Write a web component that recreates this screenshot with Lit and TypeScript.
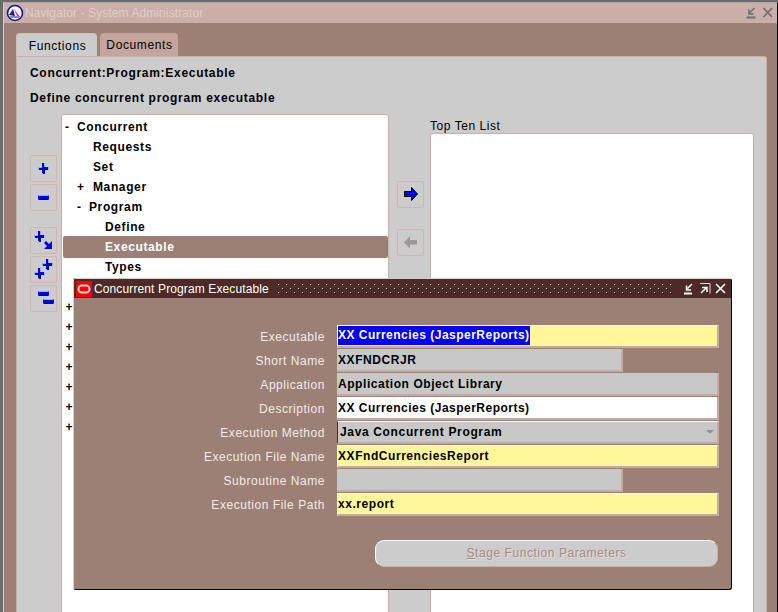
import { LitElement, html, css, svg } from "lit";
import { customElement } from "lit/decorators.js";

const plus = (x: number, y: number) => svg`<g transform="translate(${x} ${y})"><path d="M4 0h3v4h4v3H7v4H4V7H0V4h4z" fill="#0000e0"/><path d="M6 0h1v4H6zM4 10h1v1H4zM0 4h4v1H1v2H0zM10 4h1v3h-1z" fill="#8cb4f0"/><path d="M7 6h3v1H7v3H6V7z" fill="#000080"/></g>`;
const minus = (x: number, y: number) => svg`<g transform="translate(${x} ${y})"><rect x="0" y="0" width="11" height="5" rx="1.5" fill="#0000e0"/><rect x="1" y="0" width="9" height="1" fill="#8cb4f0"/><rect x="1" y="4" width="9" height="1" fill="#000080"/></g>`;

const TREE = [
  ["-", "Concurrent", 15, 3],
  ["", "Requests", 31, 0],
  ["", "Set", 31, 0],
  ["+", "Manager", 31, 15],
  ["-", "Program", 27, 15],
  ["", "Define", 43, 0],
  ["", "Executable", 42, 0, true],
  ["", "Types", 43, 0],
] as [string, string, number, number, boolean?][];

const FIELDS = [
  ["Executable", "XX Currencies (JasperReports)", "yellow full sel"],
  ["Short Name", "XXFNDCRJR", "grey short"],
  ["Application", "Application Object Library", "grey full"],
  ["Description", "XX Currencies (JasperReports)", "white full"],
  ["Execution Method", "Java Concurrent Program", "select full"],
  ["Execution File Name", "XXFndCurrenciesReport", "yellow full"],
  ["Subroutine Name", "", "grey short"],
  ["Execution File Path", "xx.report", "yellow full"],
];

@customElement("app-root")
export class AppRoot extends LitElement {
  static styles = css`
    :host { display: block; width: 778px; height: 612px; overflow: hidden; position: relative; background: #6b6b6b; font-family: "Liberation Sans", Arial, sans-serif; font-size: 12px; color: #000; }
    * { box-sizing: border-box; }
    .win { height: 612px; margin: 2px 0 0 3px; border-top: 1px solid #a8a8a8; border-left: 1px solid #cfcfcf; border-right: 1px solid #000; background: #9c7f75; display: flex; flex-direction: column; }
    .titlebar { height: 20px; flex: none; background: #ccaea8; display: flex; align-items: center; padding: 0 2px 0 2px; color: #dfcfca; letter-spacing: .09px; }
    .titlebar .t { margin-left: 1px; flex: 1; }
    .tabs { display: flex; gap: 3px; padding: 10px 0 0 12px; height: 33px; flex: none; }
    .tab { height: 23px; padding-top: 5px; text-align: center; letter-spacing: .62px; border-radius: 4px 4px 0 0; }
    .tab.on { width: 81px; background: #cccccc; border-top: 1px solid #d8bcb6; border-left: 1px solid #d8bcb6; padding-left: 1px; }
    .tab.off { width: 78px; background: #c4a59e; padding-left: 1px; }
    .panel { margin: 0 10px 0 12px; flex: 1; background: #cccccc; border-left: 1px solid #ccaea8; border-top: 1px solid #ccaea8; border-right: 1px solid #ccaea8; border-radius: 0 3px 0 0; padding: 9px 0 0 13px; }
    .crumb { font-weight: bold; letter-spacing: .7px; height: 25px; line-height: 15px; }
    .crumb + .crumb { height: 23px; }
    .main { display: flex; }
    .tools { width: 31px; flex: none; padding-top: 41px; display: flex; flex-direction: column; }
    .btn { width: 27px; height: 27px; border: 1px solid #d4b4ae; border-radius: 2px; display: block; background: #cccccc; flex: none; }
    .btn svg { display: block; }
    .g2 { margin-top: 2px; }
    .gap { margin-top: 16px; }
    .tree { width: 328px; height: 520px; background: #fff; border: 1px solid #ccaea8; border-radius: 3px 3px 0 0; padding-top: 2px; }
    .row { height: 20px; line-height: 20px; font-weight: bold; letter-spacing: .62px; position: relative; white-space: nowrap; }
    .row .sign { position: absolute; top: 0; }
    .row.sel { background: #9c7f75; color: #fff; margin: -1px 0 -1px 1px; height: 22px; line-height: 22px; border-radius: 2px; }
    .mid { width: 41px; flex: none; display: flex; flex-direction: column; align-items: center; padding-top: 67px; padding-left: 1px; }
    .mid .gap2 { margin-top: 21px; }
    .top { width: 324px; margin-top: 6px; flex: none; }
    .top .lbl { height: 13px; line-height: 13px; letter-spacing: .55px; }
    .list { height: 500px; background: #fff; border: 1px solid #ccaea8; border-radius: 3px 3px 0 0; }

    .dlg { position: absolute; left: 73px; top: 278px; width: 659px; height: 312px; background: #9c7f75; border-top: 1px solid #cfcfcf; border-left: 1px solid #cfcfcf; border-right: 1px solid #000; border-bottom: 1px solid #000; border-radius: 0 3px 3px 3px; display: flex; flex-direction: column; }
    .dtitle { height: 19px; flex: none; background: #4d2a26; color: #fff; display: flex; align-items: center; letter-spacing: .12px; padding-right: 2px; }
    .logo { width: 16px; height: 16px; background: #ff0000; margin: 0 2px; flex: none; display: block; }
    .dtitle .t { width: 184px; flex: none; white-space: nowrap; }
    .dots { width: 394px; height: 10px; flex: none; display: block; margin-top: 1px; }
    .ics { margin-left: auto; display: flex; }
    .form { padding: 27px 12px 0 0; display: grid; grid-template-columns: 251px 382px; column-gap: 12px; row-gap: 1px; align-items: start; }
    .lab { text-align: right; color: #f2ebe8; letter-spacing: .54px; height: 23px; line-height: 24px; white-space: nowrap; }
    .f { height: 23px; line-height: 22px; padding-left: 1px; font-weight: bold; letter-spacing: .56px; border-bottom: 2px solid #c8aaa4; border-right: 2px solid #c8aaa4; white-space: nowrap; background: #cccccc; }
    .short { width: 286px; }
    .yellow { background: #fff799; border-left: 1px solid #fffcd0; border-top: 1px solid #fffcd0; padding-left: 0; line-height: 21px; }
    .white { background: #fff; letter-spacing: .49px; }
    .grey { background: #c8c8c8; }
    .select { display: flex; align-items: center; justify-content: space-between; border-top: 1px solid #fff; border-left: 1px solid #4d2a26; padding: 0 3px 0 2px; background: #c8c8c8; letter-spacing: .65px; line-height: 20px; }
    .sel-text { background: #0000ff; color: #fff; letter-spacing: .49px; display: inline-block; line-height: 19px; vertical-align: top; }
    .arr { width: 0; height: 0; border-left: 4px solid transparent; border-right: 4px solid transparent; border-top: 4px solid #9c8f8a; }
    .action { margin: 24px 0 0 301px; width: 343px; height: 27px; border-radius: 9px; background: #cccccc; border: 1px solid #ccaea8; border-top-color: #fff; border-left-color: #fff; text-align: center; line-height: 24px; color: #a98a82; text-shadow: 1px 1px 0 #e6dcda; letter-spacing: .56px; }
    .extra { position: absolute; left: 63px; width: 12px; font-weight: bold; text-align: center; line-height: 20px; height: 20px; }
  `;

  render() {
    return html`
      <div class="win">
        <div class="titlebar">
          <svg width="18" height="18" viewBox="0 0 18 18">
            <circle cx="9" cy="9" r="7.500" fill="#f2f2f8" stroke="#15158c" stroke-width="1.600"/>
            <path d="M3 11l4-6 2 7z" fill="#20208c"/>
            <path d="M8 5l6 8-2 1z" fill="#c82a7a"/>
            <path d="M3 12h11l-2 2H5z" fill="#8888c8"/>
          </svg>
          <span class="t">Navigator - System Administrator</span>
          <svg width="30" height="14" viewBox="0 0 30 14" fill="none" stroke="#6e6e6e">
            <path d="M1.500 11.500h9" stroke-width="2"/><path d="M9.500 2L4.500 7M4 3.500V8H8.500" stroke-width="1.600"/>
            <path d="M18.500 2l8.500 9M27 2l-8.500 9" stroke-width="1.800"/>
          </svg>
        </div>
        <div class="tabs">
          <div class="tab on">Functions</div>
          <div class="tab off">Documents</div>
        </div>
        <div class="panel">
          <div class="crumb">Concurrent:Program:Executable</div>
          <div class="crumb">Define concurrent program executable</div>
          <div class="main">
            <div class="tools">
              <span class="btn"><svg width="25" height="25">${plus(7, 7)}</svg></span>
              <span class="btn g2"><svg width="25" height="25">${minus(7, 10)}</svg></span>
              <span class="btn gap"><svg width="25" height="25">${plus(3, 3)}<path d="M21 13v8h-8l3-3-3-3 2-2 3 3z" fill="#0000e0"/></svg></span>
              <span class="btn g2"><svg width="25" height="25">${plus(11, 2)}${plus(3, 11)}</svg></span>
              <span class="btn g2"><svg width="25" height="25">${minus(7, 5)}${minus(12, 13)}</svg></span>
            </div>
            <div class="tree">
              ${TREE.map(([s, t, pad, signX, sel]) => html`
                <div class="row ${sel ? "sel" : ""}" style="padding-left:${pad}px">
                  ${s ? html`<span class="sign" style="left:${signX}px">${s}</span>` : ""}${t}
                </div>`)}
            </div>
            <div class="mid">
              <span class="btn"><svg width="25" height="25"><path d="M6.500 9.500h7v-4l6 6.500-6 6.500v-4h-7z" fill="#0000f0" stroke="#000" stroke-width="1"/></svg></span>
              <span class="btn gap2"><svg width="25" height="25"><path d="M19 10h-7V6l-6 6.500 6 6v-4h7z" fill="#9a9a9a"/></svg></span>
            </div>
            <div class="top">
              <div class="lbl">Top Ten List</div>
              <div class="list"></div>
            </div>
          </div>
        </div>
      </div>
      ${[307, 327, 347, 367, 387, 407, 427].map((y) => html`<span class="extra" style="top:${y - 10}px">+</span>`)}
      <div class="dlg">
        <div class="dtitle">
          <svg class="logo" viewBox="0 0 16 16"><rect x="2.500" y="4.500" width="11" height="7" rx="3.500" fill="none" stroke="#ffd8d8" stroke-width="2"/></svg>
          <span class="t">Concurrent Program Executable</span>
          <svg class="dots">
            <defs>
              <pattern id="dp" width="8" height="8" patternUnits="userSpaceOnUse">
                <rect x="0" y="0" width="1" height="1" fill="#e4c8c0"/><rect x="1" y="1" width="1" height="1" fill="#000"/>
                <rect x="4" y="4" width="1" height="1" fill="#e4c8c0"/><rect x="5" y="5" width="1" height="1" fill="#000"/>
              </pattern>
            </defs>
            <rect width="394" height="10" fill="url(#dp)"/>
          </svg>
          <span class="ics">
            <svg width="46" height="16" viewBox="0 0 46 16" fill="none" stroke="#fff">
              <path d="M1 12.500h8" stroke-width="2"/><path d="M9 3L4.500 7.500M3.500 4.500V9H8" stroke-width="1.500"/>
              <path d="M17 2.500h10v10" stroke-width="1" stroke="#ddd"/><path d="M18 12l5-5M19 6.500H24V11" stroke-width="1.500"/>
              <path d="M33 3l9 9M42 3l-9 9" stroke-width="1.600"/>
            </svg>
          </span>
        </div>
        <div class="form">
          ${FIELDS.map(([l, v, c]) => html`
            <div class="lab">${l}</div>
            <div class="f ${c}">
              ${c.includes("sel") && c.includes("yellow")
                ? html`<span class="sel-text">${v}</span>`
                : c.includes("select")
                ? html`<span>${v}</span><i class="arr"></i>`
                : v}
            </div>`)}
        </div>
        <div class="action"><u>S</u>tage Function Parameters</div>
      </div>
    `;
  }
}
